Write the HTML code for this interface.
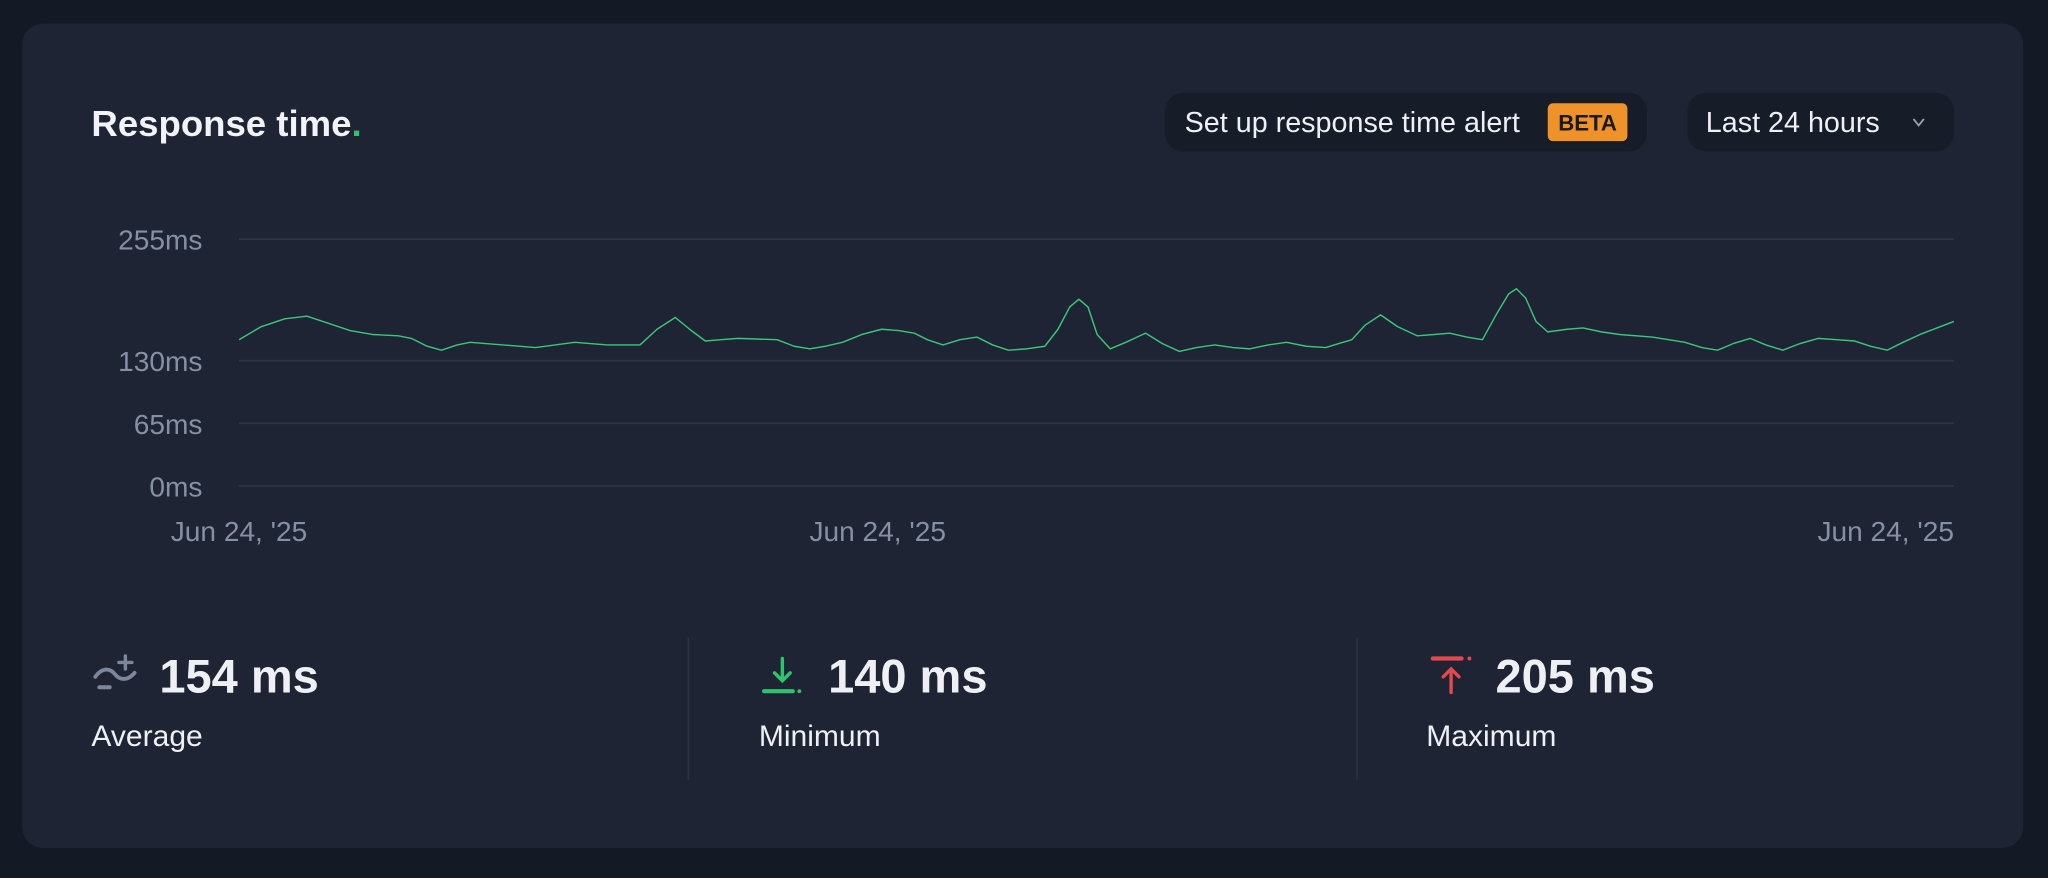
<!DOCTYPE html>
<html><head><meta charset="utf-8"><style>
html,body{margin:0;padding:0;background:#131925;}
svg{display:block}
text{font-family:"Liberation Sans",sans-serif}
</style></head><body>
<svg width="2048" height="878" viewBox="0 0 1568 672" preserveAspectRatio="none" xmlns="http://www.w3.org/2000/svg">
<rect x="0" y="0" width="1568" height="672" fill="#131925"/>
<rect x="17" y="18" width="1532" height="631" rx="16" fill="#1e2433"/>
<text x="70" y="104" font-size="28" font-weight="bold" fill="#f1f3f6">Response time<tspan fill="#2fc46b">.</tspan></text>
<rect x="892" y="71" width="369" height="45" rx="14" fill="#161c28"/>
<text x="907" y="101" font-size="22" fill="#eef0f3">Set up response time alert</text>
<rect x="1185" y="79" width="61" height="29" rx="4" fill="#f0922a"/>
<text x="1215.5" y="100" font-size="17" font-weight="bold" fill="#1a1a1a" text-anchor="middle">BETA</text>
<rect x="1292" y="71" width="204" height="45" rx="14" fill="#161c28"/>
<text x="1306" y="101" font-size="22" fill="#eef0f3">Last 24 hours</text>
<path d="M1465 91 L1469 96 L1473 91" stroke="#9aa2b2" stroke-width="1.4" fill="none"/>
<g stroke="#2e3545" stroke-width="1.3">
<line x1="183" y1="183" x2="1496" y2="183"/>
<line x1="183" y1="276" x2="1496" y2="276"/>
<line x1="183" y1="324" x2="1496" y2="324"/>
<line x1="183" y1="372" x2="1496" y2="372"/>
</g>
<g font-size="21.5" fill="#8690a4" text-anchor="end">
<text x="155" y="191">255ms</text>
<text x="155" y="284">130ms</text>
<text x="155" y="332">65ms</text>
<text x="155" y="380">0ms</text>
</g>
<g font-size="21.5" fill="#8690a4">
<text x="183" y="414" text-anchor="middle">Jun 24, '25</text>
<text x="672" y="414" text-anchor="middle">Jun 24, '25</text>
<text x="1496" y="414" text-anchor="end">Jun 24, '25</text>
</g>
<polyline fill="none" stroke="#3cc677" stroke-width="1.1" stroke-linejoin="round" points="183,260 200,250 218,244 235,242 250,247 268,253 285,256 305,257 315,259 327,265 338,268 350,264 360,262 385,264 410,266 425,264 440,262 465,264 490,264 503,252 517,243 528,252 540,261 552,260 565,259 595,260 608,265 620,267 632,265 645,262 660,256 675,252 688,253 700,255 710,260 722,264 735,260 748,258 760,264 772,268 786,267 800,265 810,252 819,235 826,229 833,235 840,256 850,267 862,262 877,255 890,263 903,269 916,266 930,264 944,266 957,267 971,264 985,262 1000,265 1015,266 1025,263 1035,260 1045,249 1057,241 1070,250 1085,257 1098,256 1110,255 1123,258 1135,260 1146,240 1155,225 1161,221 1168,228 1176,246 1185,254 1200,252 1212,251 1226,254 1240,256 1265,258 1290,262 1303,266 1315,268 1327,263 1340,259 1352,264 1365,268 1378,263 1392,259 1406,260 1420,261 1432,265 1445,268 1457,262 1470,256 1483,251 1496,246"/>
<g stroke="#2c3343" stroke-width="1.2">
<line x1="527" y1="488" x2="527" y2="597"/>
<line x1="1039" y1="488" x2="1039" y2="597"/>
</g>
<!-- average icon -->
<g fill="none" stroke="#7d879b" stroke-width="3" stroke-linecap="round">
<path d="M73 518 C78 511,84 511,88 516 C92 521,98 521,103 515"/>
<path d="M96 502 L96 512 M91 507 L101 507" stroke-width="2.6"/>
<path d="M76 526 L84 526"/>
</g>
<text x="122" y="530" font-size="36" font-weight="bold" fill="#eef0f3">154 ms</text>
<text x="70" y="571" font-size="23" fill="#eef0f3">Average</text>
<!-- minimum icon -->
<g fill="none" stroke="#2fc46b" stroke-width="2.6" stroke-linecap="round">
<path d="M599 504 L599 521 M593 515 L599 521 L605 515"/>
<path d="M585 529 L607 529" stroke-width="3.2"/>
</g>
<circle cx="612" cy="529" r="1.5" fill="#2fc46b"/>
<text x="634" y="530" font-size="36" font-weight="bold" fill="#eef0f3">140 ms</text>
<text x="581" y="571" font-size="23" fill="#eef0f3">Minimum</text>
<!-- maximum icon -->
<g fill="none" stroke="#e5484d" stroke-width="2.6" stroke-linecap="round">
<path d="M1097 504 L1119 504" stroke-width="3.2"/>
<path d="M1111 530 L1111 512 M1105 518 L1111 512 L1117 518"/>
</g>
<circle cx="1125" cy="504" r="1.5" fill="#e5484d"/>
<text x="1145" y="530" font-size="36" font-weight="bold" fill="#eef0f3">205 ms</text>
<text x="1092" y="571" font-size="23" fill="#eef0f3">Maximum</text>
</svg>
</body></html>
